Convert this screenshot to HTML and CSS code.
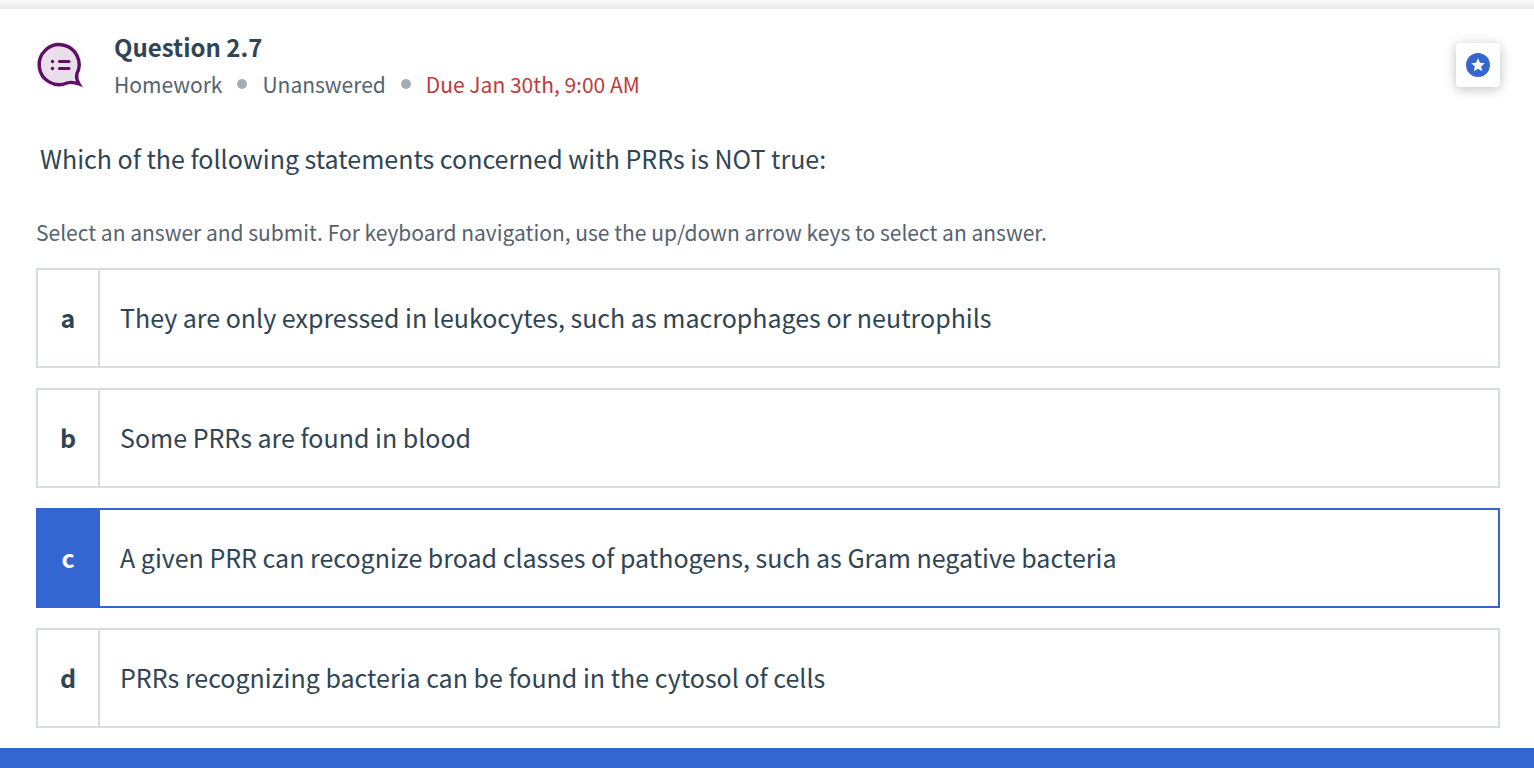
FILE: index.html
```html
<!DOCTYPE html>
<html lang="en">
<head>
    <meta charset="UTF-8">
    <meta name="viewport" content="width=device-width, initial-scale=1.0">
    <title>Question 2.7</title>
    <link rel="stylesheet" href="styles.css">
</head>
<body>
    <div class="top-shadow"></div>
    <main class="question">
        <header class="question-header">
            <svg class="question-icon" viewBox="0 0 48 48" aria-hidden="true">
                <path d="M40.800 33A20 20 0 1 0 31 42c4-1.300 7.500-.700 12 1-1.800-3-2.800-6.500-2.200-10z" fill="#e9dfea" stroke="#5f0f68" stroke-width="3.400"/>
                <path d="M23.500 20.500h9.500M23.500 27.500h9.500" stroke="#5f0f68" stroke-width="3.200" stroke-linecap="round"/>
                <circle cx="16.500" cy="20.500" r="1.700" fill="#5f0f68"/>
                <circle cx="16.500" cy="27.500" r="1.700" fill="#5f0f68"/>
            </svg>
            <div class="question-info">
                <h1 class="question-title">Question 2.7</h1>
                <ul class="question-meta">
                    <li>Homework</li>
                    <li>Unanswered</li>
                    <li class="due">Due Jan 30th, 9:00 AM</li>
                </ul>
            </div>
            <button class="star-btn" type="button" aria-label="Bookmark question">
                <svg viewBox="0 0 24 24" aria-hidden="true">
                    <circle cx="12" cy="12" r="12" fill="#3466d1"/>
                    <path d="M12 5.200l2 4.500 4.800.500-3.600 3.300 1 4.800-4.200-2.500-4.200 2.500 1-4.800-3.600-3.300 4.800-.500z" fill="#fff"/>
                </svg>
            </button>
        </header>

        <p class="question-text">Which of the following statements concerned with PRRs is NOT true:</p>

        <fieldset class="answers">
            <legend class="hint">Select an answer and submit. For keyboard navigation, use the up/down arrow keys to select an answer.</legend>
            <label class="answer">
                <input type="radio" name="answer" value="a">
                <span class="letter">a</span>
                <span class="answer-text">They are only expressed in leukocytes, such as macrophages or neutrophils</span>
            </label>
            <label class="answer">
                <input type="radio" name="answer" value="b">
                <span class="letter">b</span>
                <span class="answer-text">Some PRRs are found in blood</span>
            </label>
            <label class="answer">
                <input type="radio" name="answer" value="c" checked>
                <span class="letter">c</span>
                <span class="answer-text">A given PRR can recognize broad classes of pathogens, such as Gram negative bacteria</span>
            </label>
            <label class="answer">
                <input type="radio" name="answer" value="d">
                <span class="letter">d</span>
                <span class="answer-text">PRRs recognizing bacteria can be found in the cytosol of cells</span>
            </label>
        </fieldset>
    </main>
    <footer class="bottom-bar"></footer>
</body>
</html>
```
FILE: styles.css
```css
* {
    box-sizing: border-box;
}

body {
    margin: 0;
    background-color: #fff;
    color: #2f4454;
    font-family: "Noto Sans CJK SC", sans-serif;
    font-size: 25px;
}

.top-shadow {
    height: 9px;
    background: linear-gradient(#fbfbfb, #e9e9e9);
}

.question {
    padding: 20px 34px 20px 36px;
}

.question-header {
    display: flex;
    align-items: flex-start;
}

.question-icon {
    width: 48px;
    height: 48px;
    margin: 12px 30px 0 0;
}

.question-info {
    flex: 1;
}

.question-title {
    margin: 0;
    font-size: 24px;
    line-height: 36px;
    font-weight: 700;
}

.question-meta {
    display: flex;
    margin: 0;
    padding: 0;
    list-style: none;
    color: #55626f;
    font-size: 21px;
    line-height: 38px;
}

.question-meta li {
    display: flex;
    align-items: center;
}

.question-meta li + li::before {
    content: "";
    width: 10px;
    height: 10px;
    margin: 0 15px;
    border-radius: 50%;
    background-color: #a3adb5;
}

.question-meta .due {
    color: #c03a3a;
}

.star-btn {
    display: flex;
    align-items: center;
    justify-content: center;
    width: 44px;
    height: 44px;
    margin-top: 14px;
    padding: 0;
    border: none;
    border-radius: 4px;
    background-color: #fff;
    box-shadow: 0 2px 12px rgba(0, 0, 0, 0.25);
    cursor: pointer;
}

.star-btn svg {
    width: 24px;
    height: 24px;
}

.question-text {
    margin: 35px 4px 0;
    line-height: 40px;
}

.answers {
    display: flex;
    flex-direction: column;
    gap: 20px;
    margin: 36px 0 0;
    padding: 0;
    border: none;
}

.hint {
    margin-bottom: 18px;
    padding: 0;
    color: #55626f;
    font-size: 21px;
    line-height: 36px;
}

.answer {
    position: relative;
    display: flex;
    min-height: 100px;
    border: 2px solid #d8dce0;
    line-height: 40px;
    cursor: pointer;
}

.answer input {
    position: absolute;
    opacity: 0;
}

.letter {
    display: flex;
    align-items: center;
    justify-content: center;
    width: 62px;
    padding-bottom: 2px;
    border-right: 2px solid #d8dce0;
    font-weight: 700;
}

.answer-text {
    flex: 1;
    align-self: center;
    padding: 0 20px 2px;
}

.answer:has(input:checked) {
    border-color: #3466d1;
}

.answer input:checked + .letter {
    border-color: #3466d1;
    background-color: #3466d1;
    color: #fff;
}

.bottom-bar {
    height: 20px;
    background-color: #3466d1;
}
```
